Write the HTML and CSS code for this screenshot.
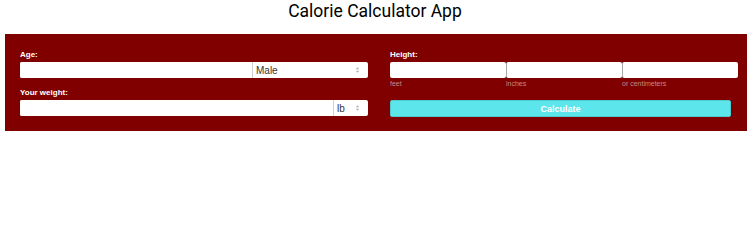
FILE: index.html
```html
<!DOCTYPE html>
<html lang="en">
<head>
<meta charset="utf-8">
<title>Calorie Calculator App</title>
<link rel="stylesheet" href="styles.css">
</head>
<body>
<h1 class="title">Calorie Calculator App</h1>
<form class="panel">
  <div class="col">
    <label class="label">Age:</label>
    <div class="row row-age">
      <input class="field" type="text">
      <div class="select-wrap">
        <span class="select-text">Male</span>
        <svg class="arrows" width="5" height="8" viewBox="0 0 5 8"><path d="M0.8 3.2 L2.5 1.2 L4.2 3.2 Z M0.8 4.8 L2.5 6.8 L4.2 4.8 Z" fill="#b0b0b0"/></svg>
      </div>
    </div>
    <label class="label label-gap">Your weight:</label>
    <div class="row row-weight">
      <input class="field" type="text">
      <div class="select-wrap">
        <span class="select-text">lb</span>
        <svg class="arrows" width="5" height="8" viewBox="0 0 5 8"><path d="M0.8 3.2 L2.5 1.2 L4.2 3.2 Z M0.8 4.8 L2.5 6.8 L4.2 4.8 Z" fill="#b0b0b0"/></svg>
      </div>
    </div>
  </div>
  <div class="col">
    <label class="label">Height:</label>
    <div class="row row-height">
      <div class="hcell"><input class="field" type="text"><span class="sub">feet</span></div>
      <div class="hcell"><input class="field sep" type="text"><span class="sub">inches</span></div>
      <div class="hcell"><input class="field sep" type="text"><span class="sub">or centimeters</span></div>
    </div>
    <button class="calc" type="button">Calculate</button>
  </div>
</form>
</body>
</html>
```
FILE: styles.css
```css
html, body {
  margin: 0;
  padding: 0;
  background: #fff;
}
.title {
  margin: 0 0 12px 0;
  font-family: Roboto, "Liberation Sans", sans-serif;
  font-weight: 400;
  font-size: 17.5px;
  line-height: 22px;
  text-align: center;
  color: #000;
}
.panel {
  margin: 0 3px 0 5px;
  background: #800000;
  padding: 16px 9px 14px 15px;
  display: grid;
  grid-template-columns: 348px 348px;
  column-gap: 22px;
  font-family: "Liberation Sans", Arial, sans-serif;
}
.col {
  display: flex;
  flex-direction: column;
}
.label {
  display: block;
  color: #fff;
  font-weight: 700;
  font-size: 8px;
  line-height: 10px;
  margin-bottom: 2px;
}
.label-gap {
  margin-top: 10px;
}
.row {
  display: grid;
  height: 16px;
  background: #fff;
  border-radius: 2px;
}
.row-age { grid-template-columns: 232px 116px; }
.row-weight { grid-template-columns: 313px 35px; }
.row-height {
  grid-template-columns: 116px 116px 116px;
  background: transparent;
  height: auto;
}
.field {
  box-sizing: border-box;
  width: 100%;
  height: 16px;
  margin: 0;
  border: 0;
  padding: 0 4px;
  background: #fff;
  border-radius: 2px;
  font-family: inherit;
  font-size: 10px;
  outline: none;
}
.field.sep {
  border-left: 1px solid #a8a8a8;
}
.select-wrap {
  box-sizing: border-box;
  position: relative;
  display: flex;
  align-items: center;
  height: 16px;
  border-left: 1px solid #d0d0d0;
  padding-left: 3px;
}
.select-text {
  font-size: 10px;
  color: #333;
}
.arrows {
  position: absolute;
  right: 8px;
  top: 4px;
}
.hcell {
  display: flex;
  flex-direction: column;
}
.sub {
  font-size: 7px;
  line-height: 9px;
  color: #c08a8a;
  margin-top: 1px;
}
.calc {
  margin-top: 12px;
  width: 341px;
  height: 17px;
  padding: 0;
  border: 1px solid #4fc9d0;
  border-radius: 2px;
  background: #5ce6ec;
  color: #fff;
  font-family: "Liberation Sans", Arial, sans-serif;
  font-weight: 700;
  font-size: 9px;
  cursor: pointer;
}
```
